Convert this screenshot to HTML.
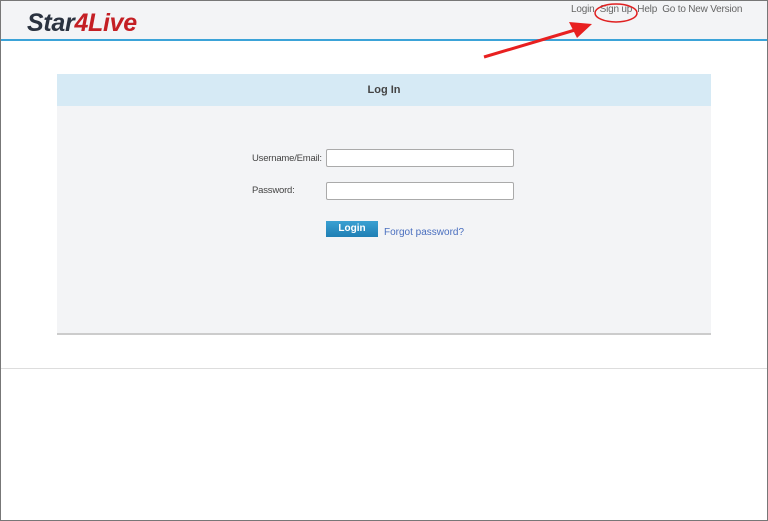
<!DOCTYPE html>
<html><head><style>
body{margin:0;width:768px;height:521px;overflow:hidden;font-family:"Liberation Sans",sans-serif;background:#fff;position:relative}
.frame{position:absolute;left:0;top:0;width:766px;height:519px;border:1px solid #777}
.hdr{position:absolute;left:1px;top:1px;width:766px;height:38px;background:#f3f4f6;border-bottom:2px solid #3ba3d8}
.logo{position:absolute;left:26px;top:8px;font-size:25px;font-weight:bold;font-style:italic;color:#2b3340;letter-spacing:-0.3px}
.logo span{color:#c41f24}
.nav{position:absolute;top:3px;left:570px;font-size:10px;color:#666;white-space:nowrap;letter-spacing:-0.2px}
.panel{position:absolute;left:57px;top:74px;width:654px;height:259px;background:#f3f4f6;border-bottom:2px solid #ccc}
.ph{height:32px;background:#d6eaf5;text-align:center;line-height:32px;font-size:11px;font-weight:bold;color:#444}
.lbl{position:absolute;font-size:9.5px;color:#444;letter-spacing:-0.2px}
.inp{position:absolute;left:326px;width:186px;height:16px;background:#fff;border:1px solid #aaa;border-radius:2px}
.btn{position:absolute;left:326px;top:221px;width:52px;height:16px;background:linear-gradient(#3aa0d2,#1f7fb4);color:#fff;font-size:10px;font-weight:bold;text-align:center;line-height:16px}
.fp{position:absolute;left:384px;top:227px;font-size:10px;color:#4a6fbf}
.line{position:absolute;left:1px;top:368px;width:766px;height:1px;background:#ddd}
</style></head><body>
<div class="frame"></div>
<div class="hdr"><div class="logo">Star<span>4Live</span></div>
<div class="nav">Login&nbsp; Sign up&nbsp; Help&nbsp; Go to New Version</div></div>
<svg style="position:absolute;left:0;top:0" width="768" height="80">
<ellipse cx="616" cy="13" rx="21" ry="9" fill="none" stroke="#e02020" stroke-width="1.5"/>
<line x1="484" y1="57" x2="575" y2="30" stroke="#e82020" stroke-width="3"/>
<polygon points="592,24 569,22 577,38" fill="#e82020"/>
</svg>
<div class="panel"><div class="ph">Log In</div></div>
<div class="lbl" style="left:252px;top:153px">Username/Email:</div>
<div class="inp" style="top:149px"></div>
<div class="lbl" style="left:252px;top:185px">Password:</div>
<div class="inp" style="top:182px"></div>
<div class="btn">Login</div>
<div class="fp">Forgot password?</div>
<div class="line"></div>
</body></html>
